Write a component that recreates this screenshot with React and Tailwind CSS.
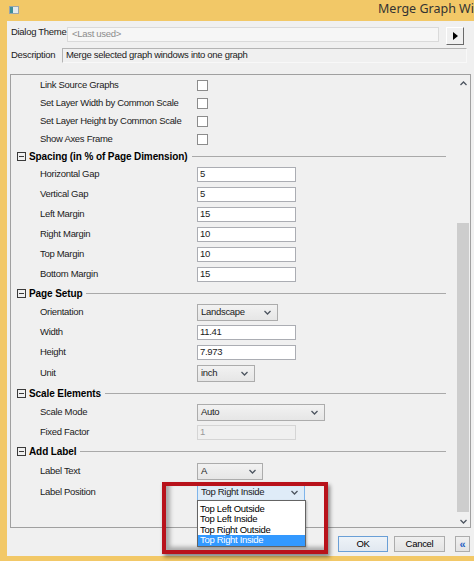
import React from 'react';

function Chevron({ up = false }) {
  return (
    <svg width="7" height="5" viewBox="0 0 7 5" className="shrink-0">
      <polyline
        points={up ? '0.5,4 3.5,1 6.5,4' : '0.5,1 3.5,4 6.5,1'}
        fill="none"
        stroke="#4d5560"
        strokeWidth="1.3"
      />
    </svg>
  );
}

function Select({ value, wClass, active = false, children }) {
  return (
    <div
      className={`relative ${wClass} h-[17px] flex items-center justify-between pl-[3px] pr-[6px] border ${
        active
          ? 'border-[#7eb4ea] bg-[#dfecf8]'
          : 'border-[#acacac] bg-linear-to-b from-[#f2f2f2] to-[#e6e6e6]'
      }`}
    >
      <span className="whitespace-nowrap">{value}</span>
      <Chevron />
      {children}
    </div>
  );
}

function TextInput({ value, disabled = false }) {
  return (
    <div
      className={`w-[99px] h-[15px] flex items-center pl-[2px] border ${
        disabled
          ? 'border-[#d5d5d5] bg-[#f0f0f0] text-[#9a9a9a]'
          : 'border-[#abadb3] bg-white'
      }`}
    >
      {value}
    </div>
  );
}

function Checkbox() {
  return <div className="w-[11px] h-[11px] border border-[#8c8c8c] bg-white" />;
}

function Header({ label, h }) {
  return (
    <div className={`flex items-center ${h} pl-[6px]`}>
      <div className="w-[9px] h-[9px] border border-[#3a3a3a] flex items-center justify-center shrink-0">
        <div className="w-[5px] h-px bg-[#3a3a3a]" />
      </div>
      <span className="ml-[3px] font-bold text-[10px] tracking-[-0.1px] whitespace-nowrap text-black">
        {label}
      </span>
      <div className="flex-1 h-px bg-[#a9a9a9] ml-[4px] mr-[11px]" />
    </div>
  );
}

function Row({ label, h, children }) {
  return (
    <div className={`flex items-center ${h}`}>
      <div className="pl-[29px] w-[186px] shrink-0 whitespace-nowrap">{label}</div>
      {children}
    </div>
  );
}

const list = ['Top Left Outside', 'Top Left Inside', 'Top Right Outside', 'Top Right Inside'];

export default function App() {
  return (
    <div className="relative w-[474px] h-[561px] overflow-hidden bg-[#f2c867] font-['Liberation_Sans',Arial,sans-serif] text-[9.5px] tracking-[-0.3px] text-[#1b1b1b]">
      {/* Title bar */}
      <div className="flex items-center h-[21px] pb-[2px]">
        <div className="ml-[9px] w-[10px] h-[8px] bg-[#e4eaec] border border-[#9aa5aa] flex shrink-0">
          <div className="w-[3px] h-full bg-[#3f8f99]" />
        </div>
        <span className="ml-[359px] shrink-0 whitespace-nowrap font-['Noto_Sans',sans-serif] text-[12.5px] tracking-normal text-[#333333]">
          Merge Graph Windows
        </span>
      </div>

      {/* Client */}
      <div className="ml-[7px] w-[480px] h-[535px] bg-[#f0f0f0] flex flex-col">
        {/* Dialog theme */}
        <div className="mt-[6px] flex items-start h-[18px]">
          <div className="pl-[4px] w-[60px] h-[10px] leading-[10px] whitespace-nowrap">Dialog Theme</div>
          <div className="w-[372px] h-[15px] border border-[#dadada] bg-[#f6f6f6] text-[#8c8c8c] pl-[4px] flex items-center">
            &lt;Last used&gt;
          </div>
          <div className="ml-[7px] w-[18px] h-[18px] bg-[#f0f0f0] border border-t-white border-l-white border-r-[#6a6a6a] border-b-[#6a6a6a] flex items-center justify-center">
            <svg width="5" height="8" viewBox="0 0 5 8">
              <polygon points="0,0 5,4 0,8" fill="#000" />
            </svg>
          </div>
        </div>

        {/* Description */}
        <div className="mt-[3px] flex items-center h-[15px]">
          <div className="pl-[4px] w-[55px] whitespace-nowrap">Description</div>
          <div className="w-[405px] h-[15px] border border-t-[#b4b4b4] border-l-[#b4b4b4] border-r-[#f8f8f8] border-b-[#f8f8f8] pl-[3px] flex items-center whitespace-nowrap">
            Merge selected graph windows into one graph
          </div>
        </div>

        {/* Panel */}
        <div className="mt-[11px] ml-[3px] w-[461px] h-[454px] border border-[#a0a0a0] flex">
          <div className="flex-1 flex flex-col pt-[1px]">
            <Row label="Link Source Graphs" h="h-[18px]"><Checkbox /></Row>
            <Row label="Set Layer Width by Common Scale" h="h-[18px]"><Checkbox /></Row>
            <Row label="Set Layer Height by Common Scale" h="h-[18px]"><Checkbox /></Row>
            <Row label="Show Axes Frame" h="h-[18px]"><Checkbox /></Row>

            <Header label="Spacing (in % of Page Dimension)" h="h-[17px]" />
            <Row label="Horizontal Gap" h="h-[19px]"><TextInput value="5" /></Row>
            <Row label="Vertical Gap" h="h-[20px]"><TextInput value="5" /></Row>
            <Row label="Left Margin" h="h-[20px]"><TextInput value="15" /></Row>
            <Row label="Right Margin" h="h-[20px]"><TextInput value="10" /></Row>
            <Row label="Top Margin" h="h-[20px]"><TextInput value="10" /></Row>
            <Row label="Bottom Margin" h="h-[20px]"><TextInput value="15" /></Row>

            <Header label="Page Setup" h="h-[18px]" />
            <Row label="Orientation" h="h-[20px]"><Select value="Landscape" wClass="w-[81px]" /></Row>
            <Row label="Width" h="h-[20px]"><TextInput value="11.41" /></Row>
            <Row label="Height" h="h-[21px]"><TextInput value="7.973" /></Row>
            <Row label="Unit" h="h-[20px]"><Select value="inch" wClass="w-[58px]" /></Row>

            <Header label="Scale Elements" h="h-[20px]" />
            <Row label="Scale Mode" h="h-[19px]"><Select value="Auto" wClass="w-[128px]" /></Row>
            <Row label="Fixed Factor" h="h-[20px]"><TextInput value="1" disabled /></Row>

            <Header label="Add Label" h="h-[19px]" />
            <Row label="Label Text" h="h-[20px]"><Select value="A" wClass="w-[66px]" /></Row>
            <Row label="Label Position" h="h-[22px]">
              <Select value="Top Right Inside" wClass="w-[108px]" active>
                <div className="absolute left-[-1px] top-full w-[109px] border border-[#646464] bg-white pt-[3px] z-10 shadow-[1px_1px_2px_rgba(0,0,0,0.25)]">
                  {list.map((t, i) => (
                    <div
                      key={t}
                      className={`h-[10.5px] leading-[10.5px] pl-[2px] whitespace-nowrap ${
                        i === 3 ? 'bg-[#3399ff] text-white' : 'text-black'
                      }`}
                    >
                      {t}
                    </div>
                  ))}
                </div>
              </Select>
            </Row>
          </div>

          {/* Scrollbar */}
          <div className="w-[13px] flex flex-col">
            <div className="h-[17px] flex items-center justify-center">
              <Chevron up />
            </div>
            <div className="h-[131px]" />
            <div className="h-[289px] w-[12px] bg-[#cdcdcd]" />
            <div className="flex-1 flex items-end justify-center pb-[3px]">
              <Chevron />
            </div>
          </div>
        </div>

        {/* Buttons */}
        <div className="mt-[8px] flex h-[16px]">
          <div className="ml-[331px] w-[50px] h-[16px] border border-[#6a9fd6] bg-linear-to-b from-[#eef3f8] to-[#e1e8f0] flex items-center justify-center text-black">
            OK
          </div>
          <div className="ml-[6px] w-[51px] h-[16px] border border-[#acacac] bg-linear-to-b from-[#f0f0f0] to-[#e3e3e3] flex items-center justify-center text-black">
            Cancel
          </div>
          <div className="ml-[10px] w-[15px] h-[16px] border border-[#acacac] bg-linear-to-b from-[#f0f0f0] to-[#e3e3e3] flex items-center justify-center text-[#1f5fc4] font-bold text-[11px] leading-none">
            «
          </div>
        </div>
      </div>

      {/* Red annotation rectangle */}
      <div className="absolute left-[162px] top-[482px] w-[166px] h-[72px] border-[4px] border-[#b8121b] shadow-[2px_3px_4px_rgba(0,0,0,0.45),inset_4px_-3px_4px_rgba(0,0,0,0.3)] pointer-events-none" />
    </div>
  );
}
